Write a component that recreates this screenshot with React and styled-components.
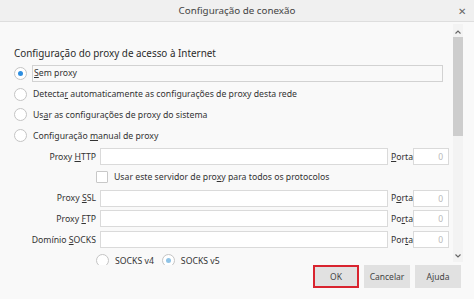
import styled, { createGlobalStyle } from "styled-components";

const GlobalStyle = createGlobalStyle`
  html, body { margin: 0; padding: 0; }
  body {
    background: #f9f9f9;
    font-family: "Noto Sans", "Open Sans", sans-serif;
    color: #333;
  }
`;

const Window = styled.div`
  width: 474px;
  height: 299px;
  display: flex;
  flex-direction: column;
  background: #f9f9f9;
  overflow: hidden;
`;

const TitleBar = styled.header`
  height: 21px;
  flex: none;
  display: flex;
  align-items: center;
  justify-content: center;
  position: relative;
  background: #f0f0f0;
  border-bottom: 1px solid #dedede;
  font-size: 9.8px;
  color: #444;
`;

const Close = styled.span`
  position: absolute;
  right: 8px;
  top: 4px;
  font-size: 10px;
  color: #666;
`;

const Main = styled.div`
  height: 243px;
  flex: none;
  display: flex;
`;

const Content = styled.div`
  flex: 1;
  overflow: hidden;
  padding: 22px 0 0 14px;
`;

const Heading = styled.h1`
  margin: 0;
  height: 19px;
  line-height: 19px;
  font-size: 9.9px;
  font-weight: 400;
  color: #2a2a2a;
`;

const Row = styled.div`
  height: 20.8px;
  display: flex;
  align-items: center;
  font-size: 8.7px;
  white-space: pre;
  padding-left: ${(p) => p.$indent || 0}px;
`;

const Radio = styled.span`
  width: 11px;
  height: 11px;
  flex: none;
  border-radius: 50%;
  border: 1px solid #c4c4c4;
  background: #fff;
  margin-right: 6px;
  display: flex;
  align-items: center;
  justify-content: center;
  &::after {
    content: "";
    width: 5px;
    height: 5px;
    border-radius: 50%;
    background: ${(p) => (p.$checked ? (p.$soft ? "#8fc3e6" : "#2d8ee0") : "transparent")};
  }
`;

const Focus = styled.span`
  width: 411px;
  height: 17px;
  display: flex;
  align-items: center;
  border: 1px solid #d2d2d2;
  padding-left: 1px;
  box-sizing: border-box;
  margin-left: -1px;
`;

const Key = styled.span`
  text-decoration: underline;
  text-underline-offset: 1px;
`;

const FieldRow = styled.div`
  height: 20.8px;
  display: flex;
  align-items: center;
  font-size: 8.7px;
  white-space: pre;
`;

const Label = styled.span`
  width: 82px;
  text-align: right;
  padding-right: 4px;
  flex: none;
`;

const Input = styled.span`
  width: 288px;
  height: 17px;
  box-sizing: border-box;
  background: #fff;
  border: 1px solid #dadada;
  flex: none;
`;

const PortLabel = styled.span`
  width: 22px;
  margin-left: 3px;
  flex: none;
`;

const PortInput = styled.span`
  width: 36px;
  height: 17px;
  box-sizing: border-box;
  background: #fff;
  border: 1px solid #dadada;
  flex: none;
  text-align: right;
  padding-right: 5px;
  line-height: 15px;
  color: #b8b8b8;
  font-size: 8.5px;
`;

const Checkbox = styled.span`
  width: 12px;
  height: 12px;
  box-sizing: border-box;
  border: 1px solid #c8c8c8;
  background: #fff;
  border-radius: 1px;
  margin-right: 6px;
  flex: none;
`;

const Spacer = styled.span`
  width: ${(p) => p.$w}px;
  flex: none;
`;

const ScrollBar = styled.div`
  width: 10px;
  margin-right: 11px;
  margin-top: 2px;
  margin-bottom: 3px;
  display: flex;
  flex-direction: column;
  align-items: center;
  background: #f3f3f3;
`;

const Arrow = styled.svg`
  width: 6px;
  height: 4px;
  margin: ${(p) => p.$m};
  flex: none;
`;

const Thumb = styled.div`
  width: 10px;
  height: 99px;
  background: #cdcdcd;
`;

const Grow = styled.div`
  flex: 1;
`;

const Footer = styled.footer`
  flex: 1;
  display: flex;
  justify-content: flex-end;
  align-items: flex-start;
  gap: 5px;
  padding-right: 13px;
`;

const Button = styled.button`
  width: 46px;
  height: 23px;
  box-sizing: border-box;
  border: ${(p) => (p.$focused ? "2px solid #d9242f" : "1px solid #e1e1e1")};
  background: #e1e1e1;
  font-family: inherit;
  font-size: 8.5px;
  color: #444;
  padding: 0;
`;

const Field = ({ label, port }) => (
  <FieldRow>
    <Label>{label}</Label>
    <Input />
    <PortLabel>{port}</PortLabel>
    <PortInput>0</PortInput>
  </FieldRow>
);

export default function App() {
  return (
    <>
      <GlobalStyle />
      <Window>
        <TitleBar>
          Configuração de conexão
          <Close>✕</Close>
        </TitleBar>
        <Main>
          <Content>
            <Heading>Configuração do proxy de acesso à Internet</Heading>
            <Row>
              <Radio $checked />
              <Focus><span><Key>S</Key>em proxy</span></Focus>
            </Row>
            <Row>
              <Radio />
              <span>Detecta<Key>r</Key> automaticamente as configurações de proxy desta rede</span>
            </Row>
            <Row>
              <Radio />
              <span>Us<Key>a</Key>r as configurações de proxy do sistema</span>
            </Row>
            <Row>
              <Radio />
              <span>Configuração <Key>m</Key>anual de proxy</span>
            </Row>
            <Field label={<>Proxy <Key>H</Key>TTP</>} port={<><Key>P</Key>orta</>} />
            <Row $indent={82}>
              <Checkbox />
              <span>Usar este servidor de pro<Key>x</Key>y para todos os protocolos</span>
            </Row>
            <Field label={<>Proxy <Key>S</Key>SL</>} port={<>P<Key>o</Key>rta</>} />
            <Field label={<>Proxy <Key>F</Key>TP</>} port={<>Po<Key>r</Key>ta</>} />
            <Field label={<>Domínio <Key>S</Key>OCKS</>} port={<>Por<Key>t</Key>a</>} />
            <Row $indent={82}>
              <Radio />
              <span>SOCKS v<Key>4</Key></span>
              <Spacer $w={8} />
              <Radio $checked $soft />
              <span>SOCKS <Key>v</Key>5</span>
            </Row>
          </Content>
          <ScrollBar>
            <Arrow $m="6px 0 3px" viewBox="0 0 6 4">
              <path d="M0.5 3.5 L3 1 L5.5 3.5" fill="none" stroke="#666" strokeWidth="1.1" />
            </Arrow>
            <Thumb />
            <Grow />
            <Arrow $m="0 0 4px" viewBox="0 0 6 4">
              <path d="M0.5 0.5 L3 3 L5.5 0.5" fill="none" stroke="#666" strokeWidth="1.1" />
            </Arrow>
          </ScrollBar>
        </Main>
        <Footer>
          <Button $focused>OK</Button>
          <Button>Cancelar</Button>
          <Button>A<Key>j</Key>uda</Button>
        </Footer>
      </Window>
    </>
  );
}
